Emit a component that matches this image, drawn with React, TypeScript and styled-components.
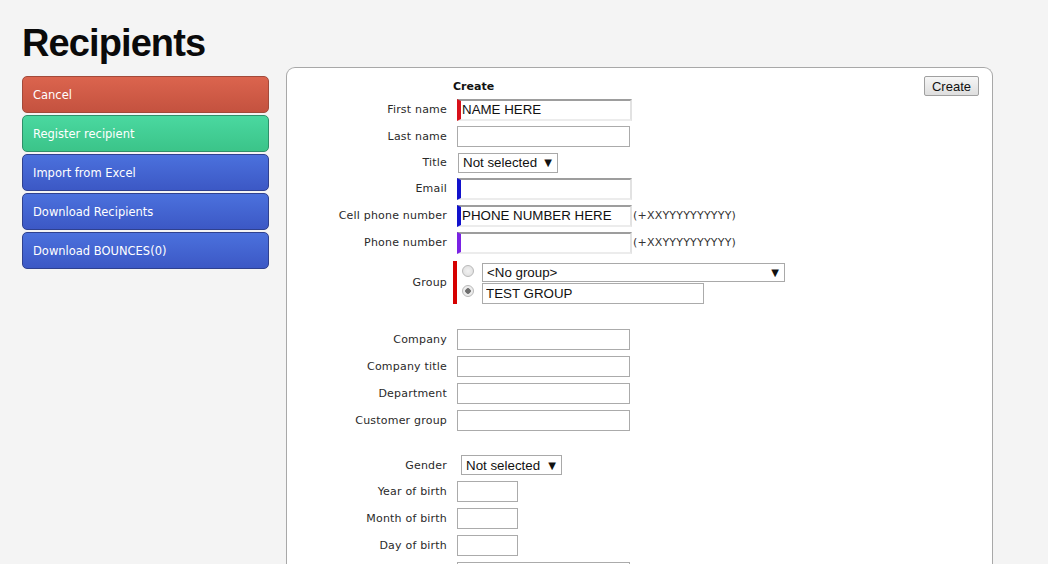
import React from 'react';
import styled, { createGlobalStyle } from 'styled-components';

const GlobalStyle = createGlobalStyle`
    html, body {
        margin: 0;
        padding: 0;
        background: #f4f4f4;
        overflow: hidden;
    }
    body {
        font-family: "DejaVu Sans", Verdana, sans-serif;
        color: #2a2a2a;
    }
`;

type Tone = 'red' | 'green' | 'blue';

const tones: Record<Tone, { top: string; bottom: string; border: string }> = {
    red: { top: '#db644e', bottom: '#c4523f', border: '#a24a3a' },
    green: { top: '#4ad8a0', bottom: '#3bc489', border: '#2f8f69' },
    blue: { top: '#4b71dd', bottom: '#3c58c5', border: '#2f418f' },
};

const Page = styled.div`
    padding: 0 22px;
    height: 564px;
    overflow: hidden;
`;

const Heading = styled.h1`
    margin: 21px 0 2px;
    font-family: "Liberation Sans", Arial, sans-serif;
    font-size: 38px;
    line-height: 44px;
    font-weight: 700;
    letter-spacing: -0.9px;
    color: #0a0a0a;
`;

const Layout = styled.div`
    display: flex;
    align-items: flex-start;
    gap: 17px;
`;

const Sidebar = styled.nav`
    width: 247px;
    margin-top: 9px;
    display: flex;
    flex-direction: column;
    gap: 2px;
`;

const SideButton = styled.button<{ $tone: Tone }>`
    height: 37px;
    padding: 0 10px;
    display: flex;
    align-items: center;
    border-radius: 5px;
    border: 1px solid ${p => tones[p.$tone].border};
    background: linear-gradient(${p => tones[p.$tone].top}, ${p => tones[p.$tone].bottom});
    color: #fff;
    font-family: "DejaVu Sans", Verdana, sans-serif;
    font-size: 11.5px;
    text-align: left;
    cursor: pointer;
`;

const Panel = styled.section`
    box-sizing: border-box;
    width: 707px;
    height: 520px;
    background: #fff;
    border: 1px solid #a8a8a8;
    border-bottom: none;
    border-radius: 9px 9px 0 0;
    padding: 9px 13px 0 0;
`;

const TopRow = styled.div`
    display: grid;
    grid-template-columns: 160px 1fr;
    column-gap: 6px;
    height: 19px;
`;

const TopBar = styled.div`
    display: flex;
    justify-content: space-between;
    align-items: flex-start;
`;

const FormTitle = styled.span`
    margin-top: 3px;
    font-size: 11px;
    font-weight: 700;
    color: #111;
`;

const CreateButton = styled.button`
    height: 20px;
    margin-top: -1px;
    padding: 0 7px;
    border: 1px solid #a0a0a0;
    border-radius: 2px;
    background: linear-gradient(#f6f6f6, #dedede);
    font-family: "Liberation Sans", Arial, sans-serif;
    font-size: 13px;
    color: #111;
`;

const Row = styled.div<{ $h?: number; $gap?: number }>`
    display: grid;
    grid-template-columns: 160px 1fr;
    column-gap: 6px;
    align-items: center;
    height: ${p => p.$h ?? 27}px;
    margin-top: ${p => p.$gap ?? 0}px;
`;

const Label = styled.label`
    text-align: right;
    font-size: 11px;
    letter-spacing: 0.2px;
    color: #2a2a2a;
`;

const Field = styled.div`
    display: flex;
    align-items: center;
`;

const TextInput = styled.input<{ $w?: number }>`
    box-sizing: border-box;
    width: ${p => p.$w ?? 173}px;
    height: 21px;
    margin-left: 4px;
    border: 1px solid #ababab;
    padding: 0 3px;
    font-family: "Liberation Sans", Arial, sans-serif;
    font-size: 13.33px;
    color: #111;
    background: #fff;
    outline: none;
`;

const MarkedInput = styled.input<{ $mark: string }>`
    box-sizing: border-box;
    width: 175px;
    height: 22px;
    margin-left: 4px;
    border-top: 2px solid #9d9d9d;
    border-right: 2px solid #e2e2e2;
    border-bottom: 2px solid #ececec;
    border-left: 4px solid ${p => p.$mark};
    padding: 0 0 0 1px;
    font-family: "Liberation Sans", Arial, sans-serif;
    font-size: 13.33px;
    color: #111;
    background: #fff;
    outline: none;
`;

const Hint = styled.span`
    margin-left: 1px;
    font-size: 11px;
    letter-spacing: 0.2px;
    color: #333;
`;

const SelectBox = styled.div<{ $w: number; $h?: number; $offset?: number }>`
    box-sizing: border-box;
    width: ${p => p.$w}px;
    height: ${p => p.$h ?? 20}px;
    margin-left: ${p => p.$offset ?? 5}px;
    border: 1px solid #a9a9a9;
    background: #fff;
    display: flex;
    align-items: center;
    justify-content: space-between;
    padding: 0 5px 0 4px;
    font-family: "Liberation Sans", Arial, sans-serif;
    font-size: 13.33px;
    color: #111;
`;

const Arrow = styled.span`
    font-family: "DejaVu Sans", sans-serif;
    font-size: 10px;
    color: #111;
`;

const GroupBox = styled.div`
    box-sizing: border-box;
    height: 43px;
    border-left: 4px solid #d60000;
    padding: 2px 0 0 5px;
    display: grid;
    grid-template-columns: 12px auto;
    grid-template-rows: 19px 21px;
    column-gap: 8px;
    row-gap: 1px;
    justify-content: start;
`;

const Radio = styled.span<{ $checked?: boolean }>`
    box-sizing: border-box;
    width: 12px;
    height: 12px;
    margin-top: 2px;
    border-radius: 50%;
    border: 1px solid #b9b9b9;
    background: radial-gradient(circle, ${p => (p.$checked ? '#6f6f6f 0 2.5px, #ececec 3px' : '#f2f2f2 0, #dcdcdc 100%')});
`;

const GroupInput = styled(TextInput)`
    margin-left: 0;
`;

type Plain = { label: string; width?: number };

const companyRows: Plain[] = [
    { label: 'Company' },
    { label: 'Company title' },
    { label: 'Department' },
    { label: 'Customer group' },
];

const birthRows: Plain[] = [
    { label: 'Year of birth', width: 61 },
    { label: 'Month of birth', width: 61 },
    { label: 'Day of birth', width: 61 },
];

const actions: { label: string; tone: Tone }[] = [
    { label: 'Cancel', tone: 'red' },
    { label: 'Register recipient', tone: 'green' },
    { label: 'Import from Excel', tone: 'blue' },
    { label: 'Download Recipients', tone: 'blue' },
    { label: 'Download BOUNCES(0)', tone: 'blue' },
];

const PHONE_HINT = '(+XXYYYYYYYYYY)';

export default function App() {
    return <>
        <GlobalStyle />
        <Page>
            <Heading>Recipients</Heading>
            <Layout>
                <Sidebar>
                    {actions.map(a => <SideButton key={a.label} $tone={a.tone}>{a.label}</SideButton>)}
                </Sidebar>
                <Panel>
                    <TopRow>
                        <span />
                        <TopBar>
                            <FormTitle>Create</FormTitle>
                            <CreateButton>Create</CreateButton>
                        </TopBar>
                    </TopRow>
                    <Row>
                        <Label>First name</Label>
                        <Field><MarkedInput $mark='#d8101a' defaultValue='NAME HERE' /></Field>
                    </Row>
                    <Row>
                        <Label>Last name</Label>
                        <Field><TextInput /></Field>
                    </Row>
                    <Row $h={25}>
                        <Label>Title</Label>
                        <Field>
                            <SelectBox $w={100} $offset={5}>Not selected <Arrow>▼</Arrow></SelectBox>
                        </Field>
                    </Row>
                    <Row>
                        <Label>Email</Label>
                        <Field><MarkedInput $mark='#1212cc' /></Field>
                    </Row>
                    <Row>
                        <Label>Cell phone number</Label>
                        <Field>
                            <MarkedInput $mark='#1212cc' defaultValue='PHONE NUMBER HERE' />
                            <Hint>{PHONE_HINT}</Hint>
                        </Field>
                    </Row>
                    <Row>
                        <Label>Phone number</Label>
                        <Field>
                            <MarkedInput $mark='#7a22e4' />
                            <Hint>{PHONE_HINT}</Hint>
                        </Field>
                    </Row>
                    <Row $h={43} $gap={5}>
                        <Label>Group</Label>
                        <GroupBox>
                            <Radio />
                            <SelectBox $w={303} $h={19} $offset={0}>&lt;No group&gt; <Arrow>▼</Arrow></SelectBox>
                            <Radio $checked />
                            <GroupInput $w={222} defaultValue='TEST GROUP' />
                        </GroupBox>
                    </Row>
                    {companyRows.map((r, i) => <Row key={r.label} $gap={i === 0 ? 22 : 0}>
                        <Label>{r.label}</Label>
                        <Field><TextInput /></Field>
                    </Row>)}
                    <Row $h={26} $gap={18}>
                        <Label>Gender</Label>
                        <Field>
                            <SelectBox $w={101} $offset={8}>Not selected <Arrow>▼</Arrow></SelectBox>
                        </Field>
                    </Row>
                    {birthRows.map(r => <Row key={r.label}>
                        <Label>{r.label}</Label>
                        <Field><TextInput $w={r.width} /></Field>
                    </Row>)}
                    <Row>
                        <Label />
                        <Field><TextInput /></Field>
                    </Row>
                </Panel>
            </Layout>
        </Page>
    </>;
}
